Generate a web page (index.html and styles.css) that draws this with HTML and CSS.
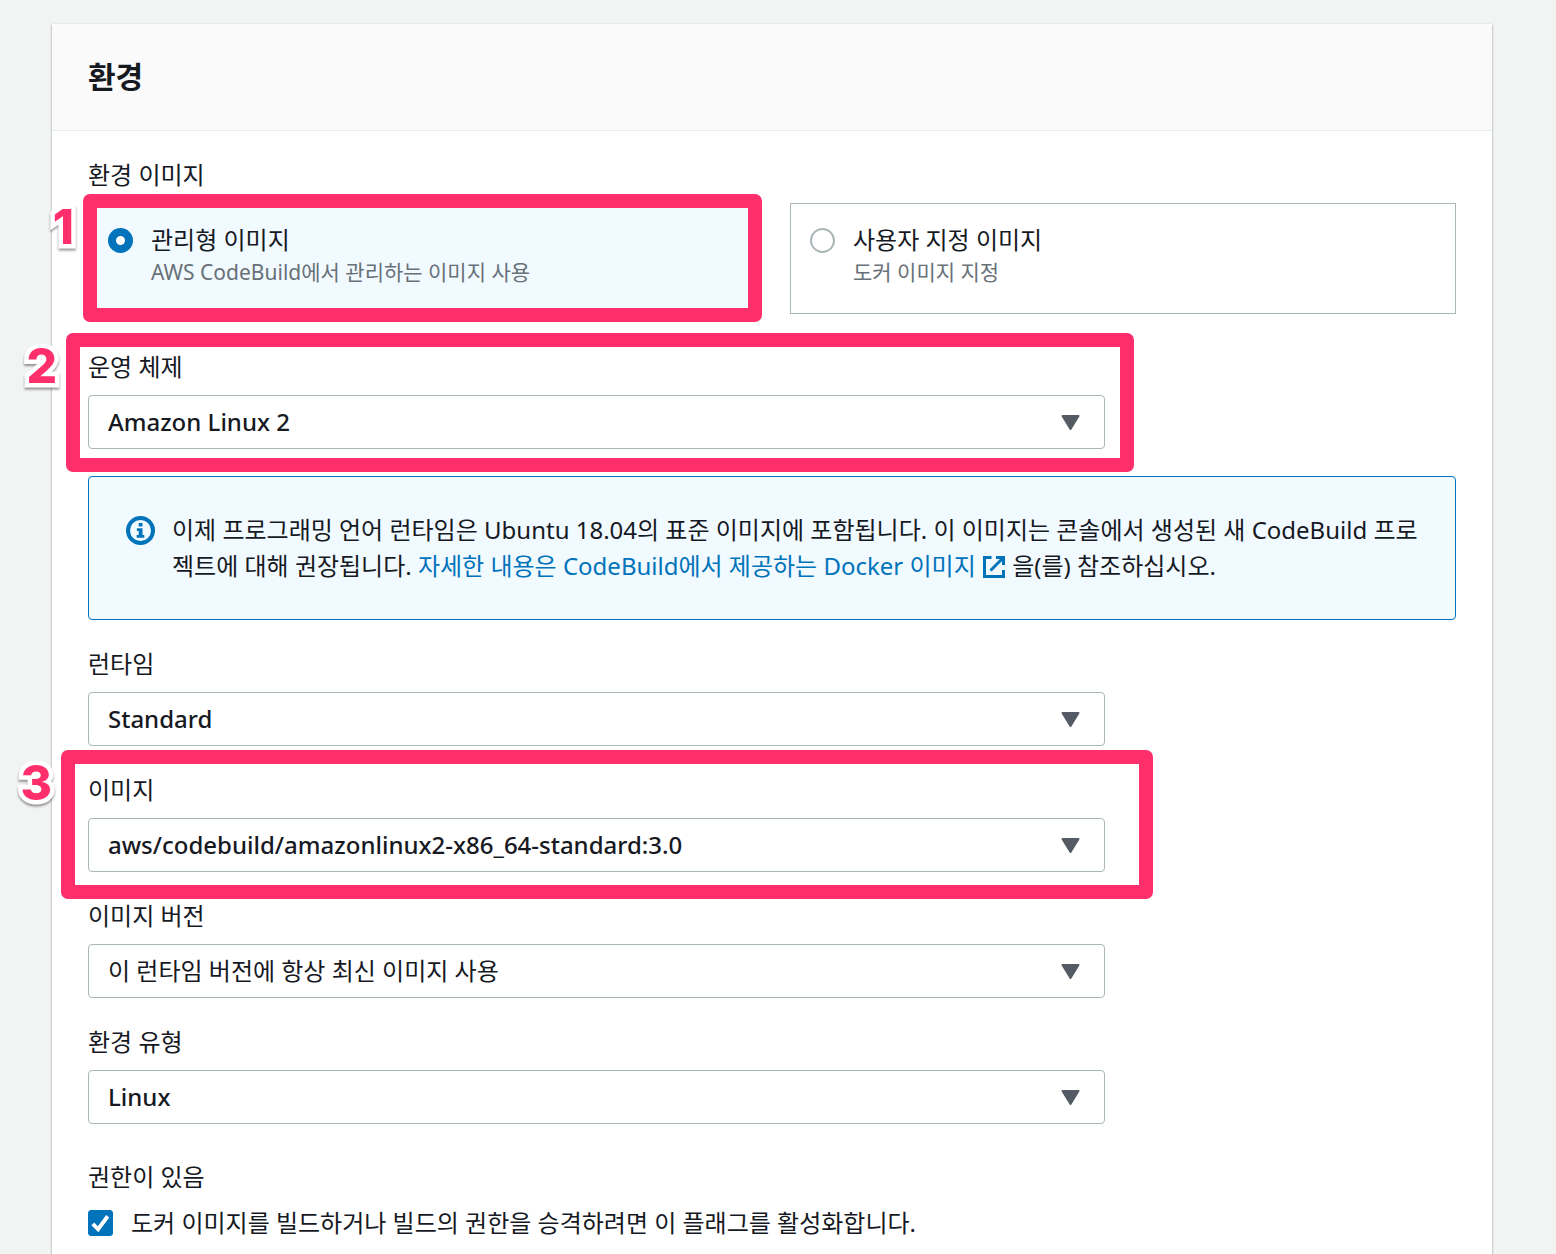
FILE: index.html
```html
<!DOCTYPE html>
<html lang="ko">
<head>
  <meta charset="UTF-8">
  <meta name="viewport" content="width=device-width, initial-scale=1.0">
  <title>환경</title>
  <link rel="stylesheet" href="styles.css">
</head>
<body>
  <main class="card">
    <header class="card-header">
      <h2>환경</h2>
    </header>

    <form class="card-body">
      <fieldset class="tiles-field">
        <legend class="label">환경 이미지</legend>
        <div class="tiles">
          <label class="tile selected">
            <input type="radio" class="radio" name="envImage" checked>
            <span class="tile-text">
              <span class="tile-title">관리형 이미지</span>
              <span class="tile-desc">AWS CodeBuild에서 관리하는 이미지 사용</span>
            </span>
            <span class="mark mark-1"><b class="mark-number">1</b></span>
          </label>
          <label class="tile">
            <input type="radio" class="radio" name="envImage">
            <span class="tile-text">
              <span class="tile-title">사용자 지정 이미지</span>
              <span class="tile-desc">도커 이미지 지정</span>
            </span>
          </label>
        </div>
      </fieldset>

      <div class="field">
        <label class="label" for="os">운영 체제</label>
        <div class="select latin">
          <select id="os"><option>Amazon Linux 2</option></select>
          <svg class="arrow" viewBox="0 0 20 16"><path d="M2.500 1h16l-8 13z"/></svg>
        </div>
        <span class="mark mark-2"><b class="mark-number">2</b></span>
      </div>

      <div class="alert">
        <svg class="info-icon" viewBox="0 0 30 30">
          <circle cx="15.500" cy="15.500" r="12.500"/>
          <path d="M13.700 8h3.800v3.400h-3.800zM11.900 13.300h5.600v6.600h1.800v2.800h-7.600v-2.800h2v-3.800h-1.800z"/>
        </svg>
        <p>이제 프로그래밍 언어 런타임은 Ubuntu 18.04의 표준 이미지에 포함됩니다. 이 이미지는 콘솔에서 생성된 새 CodeBuild 프로젝트에 대해 권장됩니다. <a href="#">자세한 내용은 CodeBuild에서 제공하는 Docker 이미지 <svg class="link-icon" viewBox="0 0 24 24"><path d="M9.500 2.500H2.500v19h19V15M14 2.500h7.500V10M21 3L8.500 15.500"/></svg></a> 을(를) 참조하십시오.</p>
      </div>

      <div class="field">
        <label class="label" for="runtime">런타임</label>
        <div class="select latin">
          <select id="runtime"><option>Standard</option></select>
          <svg class="arrow" viewBox="0 0 20 16"><path d="M2.500 1h16l-8 13z"/></svg>
        </div>
      </div>

      <div class="field">
        <label class="label" for="image">이미지</label>
        <div class="select latin">
          <select id="image"><option>aws/codebuild/amazonlinux2-x86_64-standard:3.0</option></select>
          <svg class="arrow" viewBox="0 0 20 16"><path d="M2.500 1h16l-8 13z"/></svg>
        </div>
        <span class="mark mark-3"><b class="mark-number">3</b></span>
      </div>

      <div class="field">
        <label class="label" for="version">이미지 버전</label>
        <div class="select">
          <select id="version"><option>이 런타임 버전에 항상 최신 이미지 사용</option></select>
          <svg class="arrow" viewBox="0 0 20 16"><path d="M2.500 1h16l-8 13z"/></svg>
        </div>
      </div>

      <div class="field">
        <label class="label" for="envType">환경 유형</label>
        <div class="select latin">
          <select id="envType"><option>Linux</option></select>
          <svg class="arrow" viewBox="0 0 20 16"><path d="M2.500 1h16l-8 13z"/></svg>
        </div>
      </div>

      <fieldset class="privileged">
        <legend class="label">권한이 있음</legend>
        <label class="check">
          <span class="check-box">
            <input type="checkbox" checked>
            <svg viewBox="0 0 26 26"><path d="M5 14l5.500 5.500L20.500 6"/></svg>
          </span>
          도커 이미지를 빌드하거나 빌드의 권한을 승격하려면 이 플래그를 활성화합니다.
        </label>
      </fieldset>
    </form>
  </main>
</body>
</html>
```
FILE: styles.css
```css
* {
  box-sizing: border-box;
}
body {
  margin: 0;
  background-color: #f2f3f3;
  color: #16191f;
  font-family: "Noto Sans", "Noto Sans CJK KR", sans-serif;
  font-size: 24px;
  line-height: 36px;
}
.card {
  margin: 24px 64px 0 52px;
  background-color: #fff;
  box-shadow: 0 1px 2px rgba(0, 28, 36, 0.5);
}
.card-header {
  padding: 32px 36px;
  background-color: #fafafa;
  border-bottom: 1px solid #eaeded;
}
.card-header h2 {
  margin: 0;
  font-size: 30px;
  line-height: 42px;
}
.card-body {
  padding: 26px 36px 36px;
}
fieldset {
  margin: 0;
  padding: 0;
  border: none;
  min-width: 0;
}
.label {
  display: block;
  padding: 0;
  margin-bottom: 10px;
}
.tiles-field {
  margin-bottom: 35px;
}
.tiles {
  display: grid;
  grid-template-columns: 1fr 1fr;
  gap: 36px;
}
.tile {
  position: relative;
  display: flex;
  gap: 18px;
  padding: 18px 19px 27px;
  border: 1px solid #aab7b8;
}
.tile.selected {
  background-color: #f1faff;
  border-color: #0073bb;
}
.radio {
  appearance: none;
  flex: none;
  width: 25px;
  height: 25px;
  margin: 6px 0 0;
  background-color: #fff;
  border: 2px solid #aab7b8;
  border-radius: 50%;
}
.radio:checked {
  border: 8px solid #0073bb;
}
.tile-title,
.tile-desc {
  display: block;
}
.tile-desc {
  color: #687078;
  font-size: 21px;
  line-height: 28px;
}
.field {
  position: relative;
  width: calc(75% - 9px);
  margin-bottom: 26px;
}
.select {
  position: relative;
}
.select select {
  appearance: none;
  display: block;
  width: 100%;
  height: 54px;
  padding: 0 60px 0 19px;
  background-color: #fff;
  border: 1px solid #aab7b8;
  border-radius: 4px;
  color: inherit;
  font: inherit;
}
.latin {
  font-weight: 500;
}
.arrow {
  position: absolute;
  top: 20px;
  right: 25px;
  width: 20px;
  height: 16px;
  fill: #545b64;
  stroke: #545b64;
  stroke-width: 2;
  stroke-linejoin: round;
  pointer-events: none;
}
.alert {
  display: flex;
  gap: 17px;
  margin: 27px 0 26px;
  padding: 35px 36px;
  background-color: #f1faff;
  border: 1px solid #0073bb;
  border-radius: 4px;
}
.alert p {
  margin: 0;
  word-break: break-all;
}
.alert a {
  color: #0073bb;
  text-decoration: none;
}
.info-icon {
  flex: none;
  width: 30px;
  height: 30px;
  margin-top: 3px;
  fill: #0073bb;
}
.info-icon circle {
  fill: none;
  stroke: #0073bb;
  stroke-width: 4;
}
.link-icon {
  width: 24px;
  height: 24px;
  vertical-align: -4px;
  fill: none;
  stroke: #0073bb;
  stroke-width: 3;
}
.privileged {
  margin-top: 35px;
}
.check {
  display: flex;
  gap: 18px;
}
.check-box {
  position: relative;
  width: 25px;
  height: 26px;
}
.check-box input {
  appearance: none;
  display: block;
  width: 25px;
  height: 26px;
  margin: 5px 0 0;
  border: 1px solid #aab7b8;
  border-radius: 3px;
}
.check-box input:checked {
  background-color: #0073bb;
  border-color: #0073bb;
}
.check-box svg {
  position: absolute;
  top: 5px;
  left: 0;
  width: 25px;
  height: 26px;
  fill: none;
  stroke: #fff;
  stroke-width: 4;
  pointer-events: none;
}

/* highlight frames with step numbers */
.mark {
  position: absolute;
  z-index: 1;
  border: 14px solid #ff2f6c;
  border-radius: 7px;
  pointer-events: none;
}
.mark-1 {
  top: -10px;
  left: -6px;
  right: -9px;
  bottom: -9px;
}
.mark-2 {
  top: -16px;
  left: -22px;
  right: -29px;
  bottom: -23px;
}
.mark-3 {
  top: -22px;
  left: -27px;
  right: -48px;
  bottom: -27px;
}
.mark-number {
  position: absolute;
  top: -9px;
  right: calc(100% + 23px);
  color: #ff2f6c;
  font-family: Inter, "Liberation Sans", sans-serif;
  font-size: 48px;
  font-weight: 800;
  line-height: 56px;
  -webkit-text-stroke: 9px #fff;
  paint-order: stroke fill;
  stroke-linejoin: round;
  filter: drop-shadow(0 2px 1px rgba(0, 0, 0, 0.4));
}
```
